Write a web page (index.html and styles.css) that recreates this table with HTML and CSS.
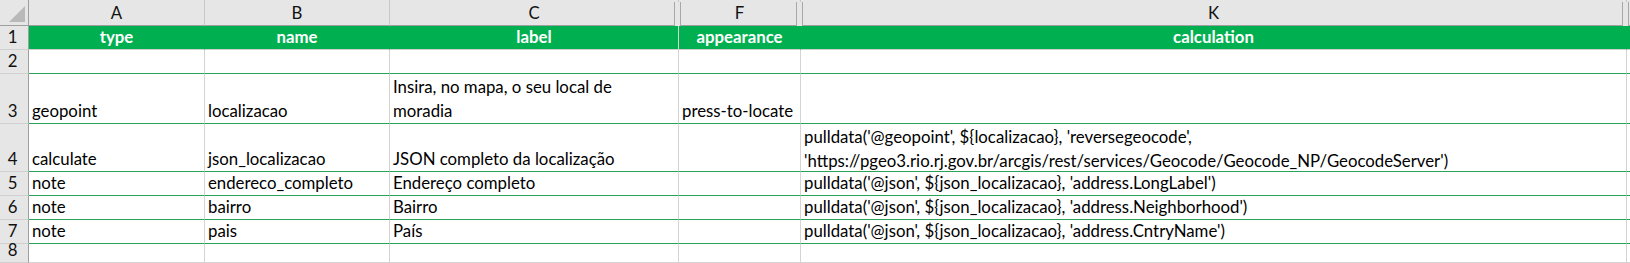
FILE: index.html
```html
<!DOCTYPE html>
<html>
<head>
<meta charset="utf-8">
<link rel="stylesheet" href="styles.css">
</head>
<body>
<div class="sheet">
  <div class="corner"><svg width="18" height="18" viewBox="0 0 18 18"><polygon points="1,17 17,17 17,1" fill="#b9b9b9"/></svg></div>
  <div class="ch">A</div>
  <div class="ch">B</div>
  <div class="ch hid">C</div>
  <div class="ch hid">F</div>
  <div class="ch hid">K</div>
  <div class="ch last"></div>

  <div class="rh">1</div>
  <div class="c hd">type</div>
  <div class="c hd">name</div>
  <div class="c hd sep">label</div>
  <div class="c hd">appearance</div>
  <div class="c hd">calculation</div>
  <div class="c hd last"></div>

  <div class="rh">2</div>
  <div class="c g"></div><div class="c g"></div><div class="c g"></div><div class="c g"></div><div class="c g"></div><div class="c g last"></div>

  <div class="rh">3</div>
  <div class="c g">geopoint</div>
  <div class="c g">localizacao</div>
  <div class="c g wrap">Insira, no mapa, o seu local de<br>moradia</div>
  <div class="c g">press-to-locate</div>
  <div class="c g"></div>
  <div class="c g last"></div>

  <div class="rh">4</div>
  <div class="c g">calculate</div>
  <div class="c g">json_localizacao</div>
  <div class="c g">JSON completo da localização</div>
  <div class="c g"></div>
  <div class="c g wrap">pulldata('@geopoint', ${localizacao}, 'reversegeocode',<br>'https://pgeo3.rio.rj.gov.br/arcgis/rest/services/Geocode/Geocode_NP/GeocodeServer')</div>
  <div class="c g last"></div>

  <div class="rh">5</div>
  <div class="c g">note</div>
  <div class="c g">endereco_completo</div>
  <div class="c g">Endereço completo</div>
  <div class="c g"></div>
  <div class="c g">pulldata('@json', ${json_localizacao}, 'address.LongLabel')</div>
  <div class="c g last"></div>

  <div class="rh">6</div>
  <div class="c g">note</div>
  <div class="c g">bairro</div>
  <div class="c g">Bairro</div>
  <div class="c g"></div>
  <div class="c g">pulldata('@json', ${json_localizacao}, 'address.Neighborhood')</div>
  <div class="c g last"></div>

  <div class="rh">7</div>
  <div class="c g">note</div>
  <div class="c g">pais</div>
  <div class="c g">País</div>
  <div class="c g"></div>
  <div class="c g">pulldata('@json', ${json_localizacao}, 'address.CntryName')</div>
  <div class="c g last"></div>

  <div class="rh">8</div>
  <div class="c"></div><div class="c"></div><div class="c"></div><div class="c"></div><div class="c"></div><div class="c last"></div>
</div>
</body>
</html>
```

FILE: styles.css
```css
* { box-sizing: border-box; }
html, body { margin: 0; padding: 0; background: #ffffff; }
body {
  width: 1630px;
  height: 263px;
  overflow: hidden;
  font-family: Lato, "Open Sans", sans-serif;
  font-size: 16.8px;
  color: #000;
}

.sheet {
  display: grid;
  grid-template-columns: 29px 176px 185px 289px 122px 826px 3px;
  grid-template-rows: 26px 24px 24px 50px 48px 24px 24px 24px 19px;
  width: 1630px;
}

.corner {
  background: #e6e6e6;
  border-right: 1px solid #9e9e9e;
  border-bottom: 1px solid #9e9e9e;
  display: flex;
  align-items: flex-end;
  justify-content: flex-end;
  padding: 0 2px 2px 0;
}
.corner svg { display: block; }

.ch {
  position: relative;
  background: #e6e6e6;
  border-right: 1px solid #c8c8c8;
  border-bottom: 1px solid #9e9e9e;
  text-align: center;
  line-height: 24px;
  padding-top: 1px;
  color: #111;
}
.ch.hid::after {
  content: "";
  position: absolute;
  top: 2px;
  bottom: -1px;
  right: -3px;
  width: 5px;
  border-left: 1px solid #a8a8a8;
  border-right: 1px solid #a8a8a8;
  background: #e6e6e6;
  z-index: 1;
}
.ch.last { border-right: none; }

.rh {
  background: #e6e6e6;
  border-right: 1px solid #9e9e9e;
  border-bottom: 1px solid #d0d0d0;
  display: flex;
  align-items: flex-end;
  justify-content: center;
  padding-right: 3px;
  line-height: 24px;
  color: #111;
}

.c {
  border-right: 1px solid #d4d4d4;
  border-bottom: 1px solid #d4d4d4;
  display: flex;
  align-items: flex-end;
  padding-left: 3px;
  line-height: 24px;
  white-space: nowrap;
  overflow: visible;
}
.c.g { border-bottom-color: #27a35b; }
.c.last { border-right: none; }
.c.wrap { display: block; padding-top: 1px; white-space: nowrap; }

.c.hd {
  background: #00b050;
  color: #fff;
  font-weight: 700;
  justify-content: center;
  padding-left: 0;
  border-right-color: #00b050;
  border-bottom-color: #cfcfcf;
}
.c.hd.sep { border-right-color: #d4d4d4; }
```
